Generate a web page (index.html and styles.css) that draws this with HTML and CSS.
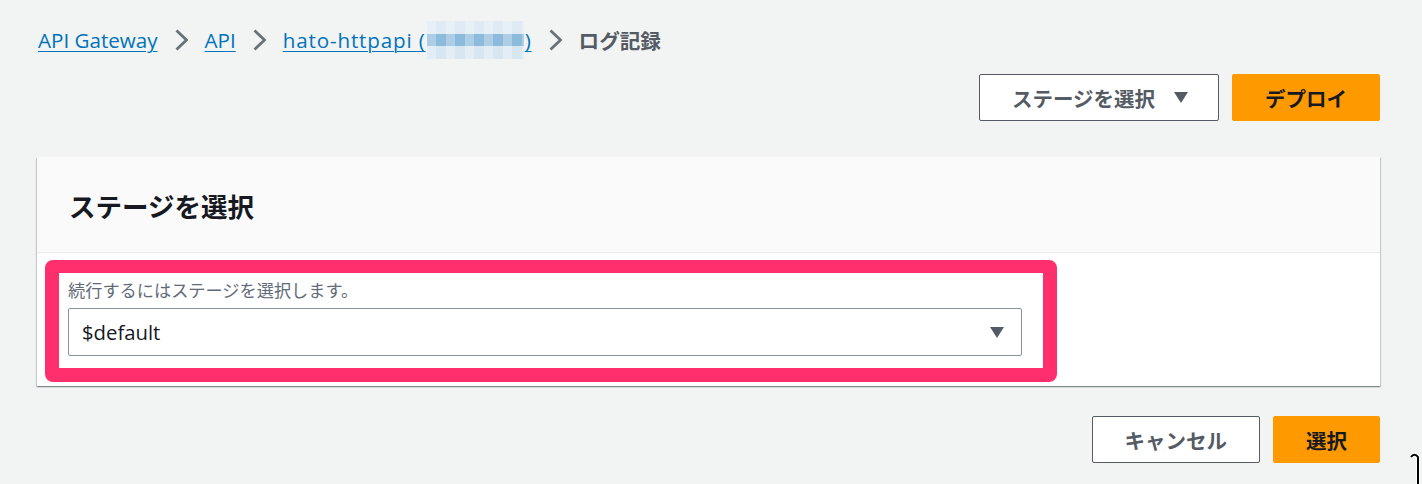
FILE: index.html
```html
<!DOCTYPE html>
<html lang="ja">
<head>
<meta charset="utf-8">
<title>ログ記録</title>
<link rel="stylesheet" href="styles.css">
</head>
<body>
<div class="page">
  <nav class="breadcrumb">
    <a class="crumb-link" href="#">API Gateway</a>
    <svg class="chev" viewBox="0 0 13 22" width="13" height="22"><path d="M1.5 1.5 L11.5 11 L1.5 20.5" fill="none" stroke="#687078" stroke-width="2.8"/></svg>
    <a class="crumb-link" href="#">API</a>
    <svg class="chev" viewBox="0 0 13 22" width="13" height="22"><path d="M1.5 1.5 L11.5 11 L1.5 20.5" fill="none" stroke="#687078" stroke-width="2.8"/></svg>
    <a class="crumb-link wide" href="#">hato-httpapi (<span class="redacted"></span>)</a>
    <svg class="chev" viewBox="0 0 13 22" width="13" height="22"><path d="M1.5 1.5 L11.5 11 L1.5 20.5" fill="none" stroke="#687078" stroke-width="2.8"/></svg>
    <span class="crumb-current">ログ記録</span>
  </nav>

  <div class="actions">
    <button class="btn btn-normal">ステージを選択<svg class="caret caret-btn" viewBox="0 0 14 11" width="14" height="11"><path d="M0 0 H14 L7 11 Z" fill="#545b64"/></svg></button>
    <button class="btn btn-primary">デプロイ</button>
  </div>

  <section class="card">
    <header class="card-header">
      <h2 class="card-title">ステージを選択</h2>
    </header>
    <div class="card-body">
      <div class="highlight">
        <label class="field-label">続行するにはステージを選択します。</label>
        <div class="select">
          <span class="select-value">$default</span>
          <svg class="caret" viewBox="0 0 14 11" width="14" height="11"><path d="M0 0 H14 L7 11 Z" fill="#545b64"/></svg>
        </div>
      </div>
    </div>
  </section>

  <div class="footer-actions">
    <button class="btn btn-normal">キャンセル</button>
    <button class="btn btn-primary">選択</button>
  </div>
</div>
<svg class="cursor" viewBox="0 0 14 34" width="14" height="34"><path d="M2 5 C4 2 7 2 9 5 L9 34" fill="none" stroke="#fff" stroke-width="4"/><path d="M2 5 C4 2 7 2 9 5 L9 34" fill="none" stroke="#000" stroke-width="2"/></svg>
</body>
</html>
```

FILE: styles.css
```css
* { box-sizing: border-box; }

html, body {
  margin: 0;
  padding: 0;
  background: #f2f3f3;
}

body {
  font-family: "Open Sans", "Noto Sans CJK JP", sans-serif;
  color: #16191f;
  position: relative;
  height: 484px;
  overflow: hidden;
}

.page {
  padding: 25px 42px 0 37px;
}

.breadcrumb {
  display: flex;
  align-items: center;
  height: 30px;
  padding-left: 1px;
  font-size: 20.6px;
}

.crumb-link {
  color: #0073bb;
  text-decoration: underline;
  text-underline-offset: 3px;
  text-decoration-thickness: 1px;
  display: inline-flex;
  align-items: center;
  white-space: nowrap;
}

.crumb-link.wide {
  letter-spacing: 0.85px;
}

.chev {
  margin: 0 17px 0 17px;
  flex: none;
}

.redacted {
  display: inline-block;
  width: 97px;
  height: 38px;
  margin: 0 1px;
  background:
    repeating-linear-gradient(90deg, rgba(255,255,255,0.28) 0 9px, rgba(255,255,255,0) 9px 19px),
    linear-gradient(180deg, #dfeaf4 0 13px, #8dbbdc 13px 25px, #d8e6f2 25px 100%);
}

.crumb-current {
  color: #545b64;
  font-weight: 700;
  font-family: "Noto Sans CJK JP", sans-serif;
}

.actions,
.footer-actions {
  display: flex;
  justify-content: flex-end;
  gap: 13px;
}

.actions { margin-top: 19px; }
.footer-actions { margin-top: 30px; }

.btn {
  height: 47px;
  padding: 0 32px;
  border-radius: 2px;
  font-family: "Noto Sans CJK JP", sans-serif;
  font-weight: 700;
  font-size: 20.5px;
  display: inline-flex;
  align-items: center;
  cursor: pointer;
}

.btn-normal {
  background: #ffffff;
  color: #545b64;
  border: 1px solid #545b64;
}

.btn-primary {
  background: #ff9900;
  color: #16191f;
  border: 1px solid #ff9900;
}

.caret-btn {
  margin-left: 19px;
  margin-right: -2px;
}

.card {
  margin-top: 36px;
  background: #ffffff;
  box-shadow: 0 1px 1px 0 rgba(0,28,36,0.3), 1px 1px 1px 0 rgba(0,28,36,0.15), -1px 1px 1px 0 rgba(0,28,36,0.15);
}

.card-header {
  height: 96px;
  background: #fafafa;
  border-bottom: 1px solid #eaeded;
  display: flex;
  align-items: center;
  padding-left: 32px;
}

.card-title {
  margin: 0;
  font-family: "Noto Sans CJK JP", sans-serif;
  font-size: 26.5px;
  font-weight: 700;
  color: #16191f;
  padding-top: 2px;
}

.card-body {
  padding: 7px 8px 4px 8px;
}

.highlight {
  width: 1012px;
  border: 14px solid #ff2e6c;
  border-top-width: 13px;
  border-radius: 8px;
  padding: 5px 9px 12px 9px;
}

.field-label {
  display: block;
  font-family: "Noto Sans CJK JP", sans-serif;
  font-size: 17.2px;
  line-height: 24px;
  color: #5f6b7a;
  margin-bottom: 6px;
}

.select {
  width: 954px;
  height: 48px;
  border: 1px solid #879596;
  border-radius: 2px;
  background: #ffffff;
  display: flex;
  align-items: center;
  justify-content: space-between;
  padding: 0 17px 0 13px;
}

.select-value {
  font-size: 20.3px;
  color: #16191f;
}

.cursor {
  position: absolute;
  left: 1409px;
  top: 452px;
}
```
